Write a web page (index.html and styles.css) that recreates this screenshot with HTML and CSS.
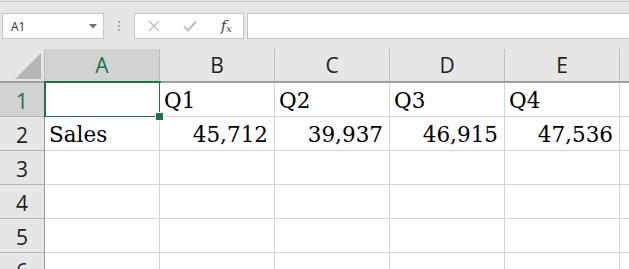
FILE: index.html
```html
<!DOCTYPE html>
<html>
<head>
    <meta charset="utf-8" />
    <title>Sheet1</title>
    <link rel="stylesheet" href="styles.css">
</head>
<body>
    <div class="formula_bar">
        <div class="name_box">
            <span>A1</span>
            <svg class="drop" width="8" height="5" viewBox="0 0 8 5"><path d="M0 0 L8 0 L4 4.5 Z" fill="#6e6e6e" /></svg>
        </div>
        <div class="grip"><i></i><i></i><i></i></div>
        <div class="fx_buttons">
            <svg width="12" height="12" viewBox="0 0 12 12"><path d="M1 1 L11 11 M11 1 L1 11" stroke="#bdbdbd" stroke-width="1.4" fill="none" /></svg>
            <svg width="14" height="12" viewBox="0 0 14 12"><path d="M1 6.5 L5 10.5 L13 1.5" stroke="#bdbdbd" stroke-width="2" fill="none" /></svg>
            <span class="fx">f<sub>x</sub></span>
        </div>
        <div class="formula_input"></div>
    </div>

    <div class="sheet">
        <div class="corner"><span class="tri"></span></div>
        <div class="col_head selected">A</div>
        <div class="col_head">B</div>
        <div class="col_head">C</div>
        <div class="col_head">D</div>
        <div class="col_head">E</div>
        <div class="col_head last"></div>

        <div class="row_head selected">1</div>
        <div class="cell active"></div>
        <div class="cell">Q1</div>
        <div class="cell">Q2</div>
        <div class="cell">Q3</div>
        <div class="cell">Q4</div>
        <div class="cell"></div>

        <div class="row_head">2</div>
        <div class="cell">Sales</div>
        <div class="cell num">45,712</div>
        <div class="cell num">39,937</div>
        <div class="cell num">46,915</div>
        <div class="cell num">47,536</div>
        <div class="cell"></div>

        <div class="row_head">3</div>
        <div class="cell"></div><div class="cell"></div><div class="cell"></div><div class="cell"></div><div class="cell"></div><div class="cell"></div>

        <div class="row_head">4</div>
        <div class="cell"></div><div class="cell"></div><div class="cell"></div><div class="cell"></div><div class="cell"></div><div class="cell"></div>

        <div class="row_head">5</div>
        <div class="cell"></div><div class="cell"></div><div class="cell"></div><div class="cell"></div><div class="cell"></div><div class="cell"></div>

        <div class="row_head">6</div>
        <div class="cell"></div><div class="cell"></div><div class="cell"></div><div class="cell"></div><div class="cell"></div><div class="cell"></div>
    </div>
</body>
</html>
```

FILE: styles.css
```css
* {
    box-sizing: border-box;
}

html {
    overflow: hidden;
}

body {
    margin: 0;
    background-color: #e6e6e6;
    font-family: "Open Sans", Arial, sans-serif;
    overflow: hidden;
    height: 269px;
}

/* Строка формул */
.formula_bar {
    display: flex;
    align-items: center;
    height: 48px;
    padding: 11px 0 10px 2px;
    border-top: 1px solid #c8c8c8;
    margin-top: 1px;
}

.name_box {
    display: flex;
    align-items: center;
    justify-content: space-between;
    width: 102px;
    height: 26px;
    padding: 0 6px 0 8px;
    background-color: #fdfdfd;
    border: 1px solid #c6c6c6;
    font-size: 12px;
    color: #333;
}

.grip {
    display: flex;
    flex-direction: column;
    gap: 2px;
    margin: 0 14px 0 14px;
}

    .grip i {
        display: block;
        width: 2px;
        height: 2px;
        background-color: #a8a8a8;
    }

.fx_buttons {
    display: flex;
    align-items: center;
    justify-content: space-between;
    width: 110px;
    height: 26px;
    padding: 0 11px 0 13px;
    background-color: #fdfdfd;
    border: 1px solid #c6c6c6;
}

.fx {
    font-family: "DejaVu Serif", serif;
    font-style: italic;
    font-size: 15px;
    color: #444;
}

    .fx sub {
        font-size: 10px;
        vertical-align: -1px;
    }

.formula_input {
    flex: 1;
    height: 26px;
    margin-left: 3px;
    background-color: #fdfdfd;
    border: 1px solid #c6c6c6;
    border-right: none;
}

/* Лист */
.sheet {
    display: grid;
    grid-template-columns: 45px repeat(5, 115px) 1fr;
    grid-template-rows: 34px repeat(6, 34px);
}

.corner {
    position: relative;
    border-right: 1px solid #bdbdbd;
    border-bottom: 2px solid #9e9e9e;
}

.tri {
    position: absolute;
    right: 3px;
    bottom: 2px;
    width: 0;
    height: 0;
    border-left: 26px solid transparent;
    border-bottom: 26px solid #b5b5b5;
}

.col_head {
    display: flex;
    align-items: center;
    justify-content: center;
    border-right: 1px solid #bdbdbd;
    border-bottom: 2px solid #9e9e9e;
    font-size: 21px;
    color: #222;
}

.col_head.last {
    border-right: none;
}

.row_head {
    display: flex;
    align-items: center;
    justify-content: center;
    padding-top: 2px;
    border-right: 1px solid #9e9e9e;
    border-bottom: 1px solid #b4b4b4;
    font-size: 21px;
    color: #222;
}

.selected {
    background-color: #d2d2d2;
    color: #217346;
}

.cell {
    position: relative;
    display: flex;
    align-items: flex-end;
    padding: 0 5px 3px 4px;
    background-color: #fff;
    border-right: 1px solid #d4d4d4;
    border-bottom: 1px solid #d4d4d4;
    font-family: "DejaVu Serif", serif;
    font-variant-numeric: oldstyle-nums;
    font-size: 21.5px;
    color: #000;
    white-space: nowrap;
}

.num {
    justify-content: flex-end;
    padding-right: 6px;
}

/* Рамка выделенной ячейки */
.active::after {
    content: "";
    position: absolute;
    left: -1px;
    top: -2px;
    right: -2px;
    bottom: -2px;
    border: 2px solid #217346;
}

.active::before {
    content: "";
    position: absolute;
    right: -5px;
    bottom: -5px;
    width: 7px;
    height: 7px;
    background-color: #217346;
    border: 1px solid #fff;
    z-index: 1;
}
```
